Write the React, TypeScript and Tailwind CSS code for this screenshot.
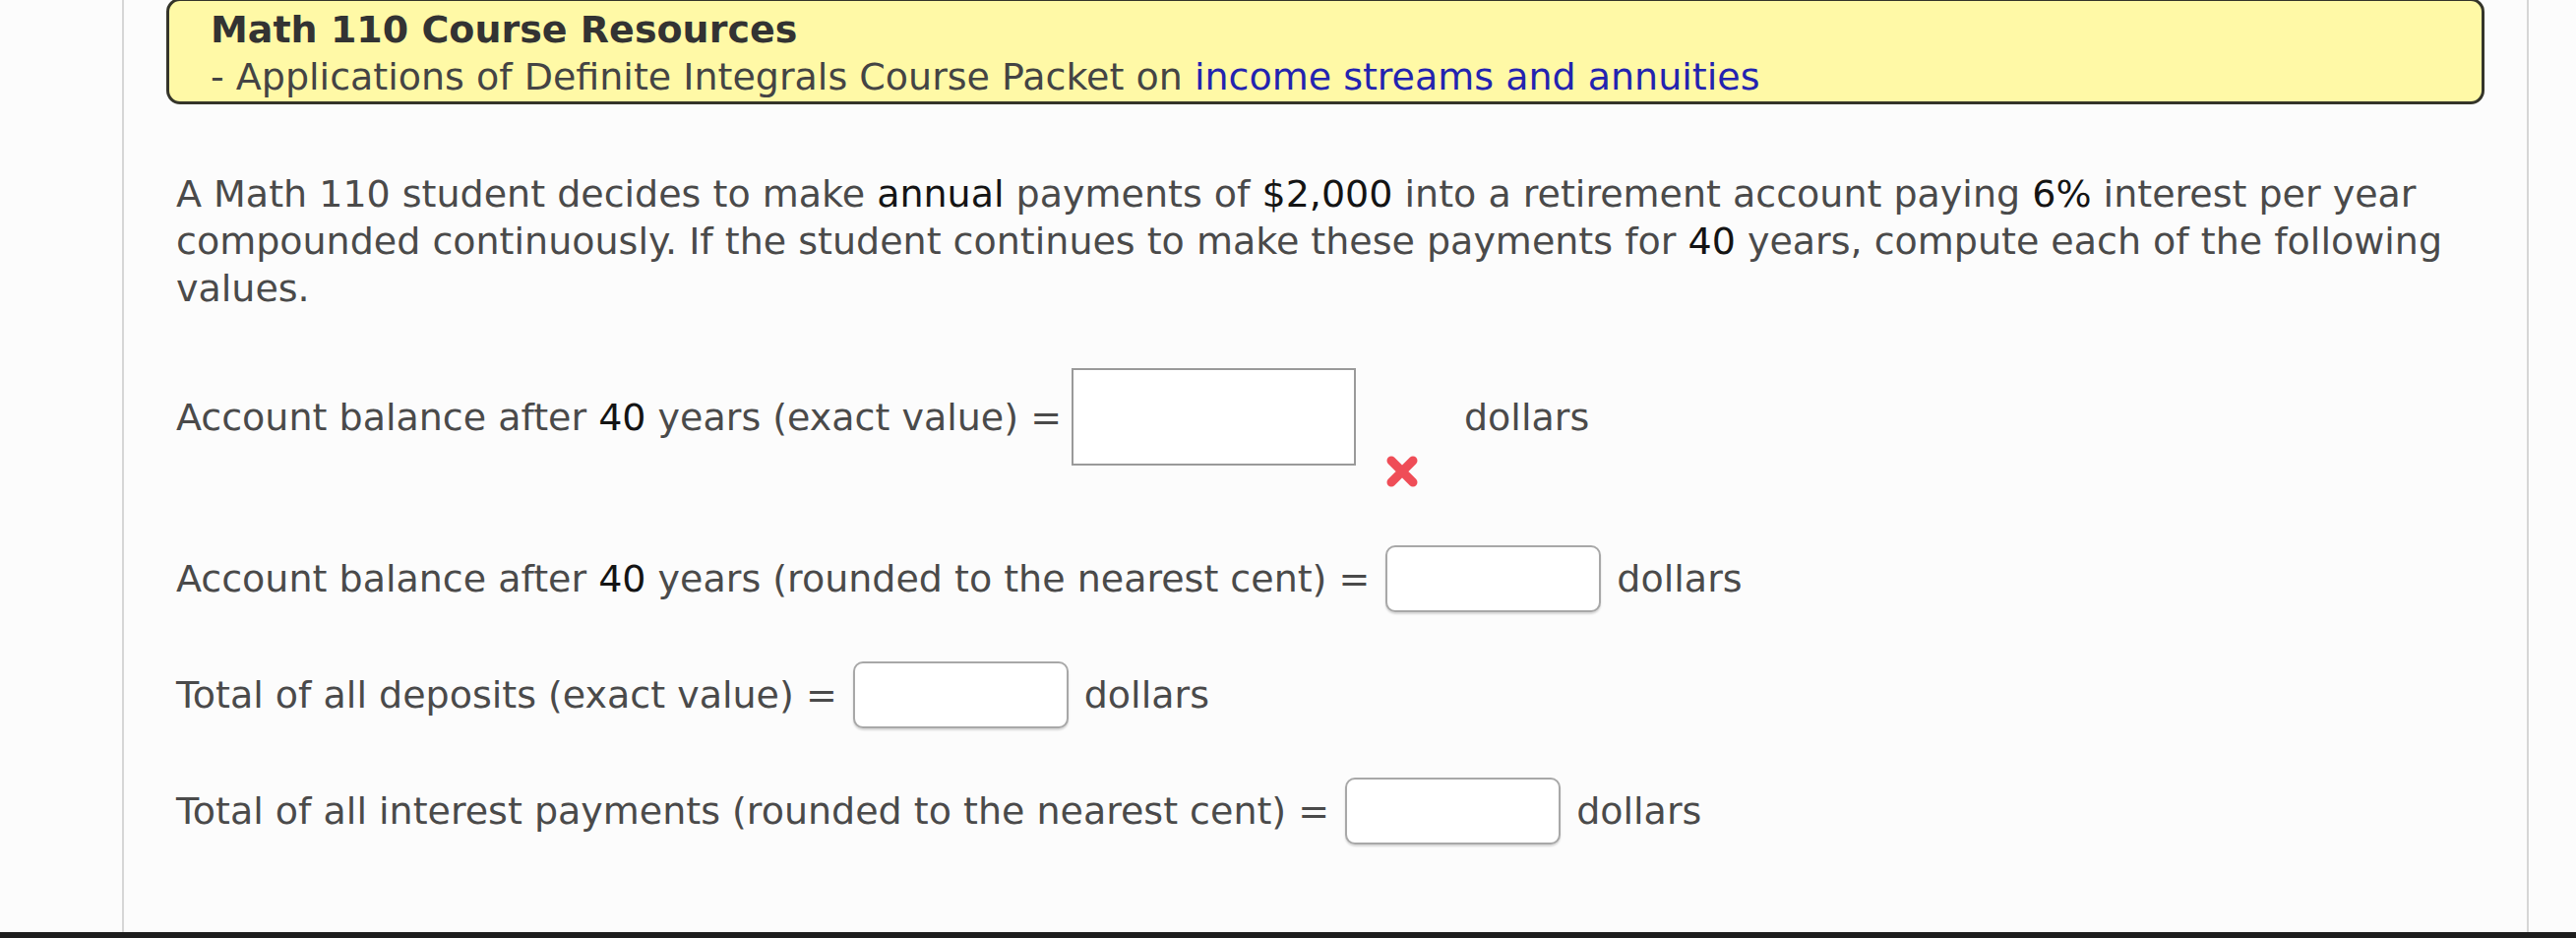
import React from 'react';

const font = { fontFamily: '"DejaVu Sans", Verdana, sans-serif' };

const Em = ({ children }: { children: React.ReactNode }) => (
    <span className="text-[#141414]">{children}</span>
);

const AnswerBox = ({ big }: { big?: boolean }) =>
    big ? (
        <div className="w-[289px] h-[99px] border-2 border-[#9a9a9a] bg-white shrink-0" />
    ) : (
        <div className="w-[219px] h-[68px] border-2 border-[#a8a8a8] rounded-[10px] bg-white shadow-[0_2px_2px_rgba(0,0,0,0.15)] shrink-0" />
    );

const WrongMark = () => (
    <svg className="w-[38px] h-[38px]" viewBox="0 0 38 38">
        <path d="M8 8 L30 30 M30 8 L8 30" stroke="#ef4d57" strokeWidth="9" strokeLinecap="round" />
    </svg>
);

const App = () => {
    return (
        <div className="w-full h-[953px] flex flex-col bg-[#fcfcfc] text-[38px] leading-[48px] text-[#4a4a4a]" style={font}>
            <div className="flex-1 flex">
                <div className="ml-[124px] w-[2446px] border-l-2 border-r-2 border-[#d6d6d6] flex flex-col">
                    {/* Course resources banner */}
                    <div className="mx-[43px] -mt-[2px] bg-[#fff9a6] border-[3px] border-[#35352a] rounded-[14px] pl-[42px] pt-[5px] pb-[1px]">
                        <div className="font-bold text-[#333]">Math 110 Course Resources</div>
                        <div className="text-[#444]">
                            - Applications of Definite Integrals Course Packet on{' '}
                            <span className="text-[#2323b0]">income streams and annuities</span>
                        </div>
                    </div>

                    <p className="mt-[67px] ml-[53px] mr-[43px]">
                        A Math 110 student decides to make <Em>annual</Em> payments of <Em>$2,000</Em> into a retirement
                        account paying <Em>6%</Em> interest per year compounded continuously. If the student continues to
                        make these payments for <Em>40</Em> years, compute each of the following values.
                    </p>

                    <div className="mt-[57px] ml-[53px] flex items-center">
                        <span>Account balance after <Em>40</Em> years (exact value) =</span>
                        <div className="ml-[10px]">
                            <AnswerBox big />
                        </div>
                        <div className="ml-[28px] self-end translate-y-[25px]">
                            <WrongMark />
                        </div>
                        <span className="ml-[44px]">dollars</span>
                    </div>

                    <div className="mt-[81px] ml-[53px] flex items-center">
                        <span>Account balance after <Em>40</Em> years (rounded to the nearest cent) =</span>
                        <div className="ml-[16px]">
                            <AnswerBox />
                        </div>
                        <span className="ml-[16px]">dollars</span>
                    </div>

                    <div className="mt-[50px] ml-[53px] flex items-center">
                        <span>Total of all deposits (exact value) =</span>
                        <div className="ml-[16px]">
                            <AnswerBox />
                        </div>
                        <span className="ml-[16px]">dollars</span>
                    </div>

                    <div className="mt-[50px] ml-[53px] flex items-center">
                        <span>Total of all interest payments (rounded to the nearest cent) =</span>
                        <div className="ml-[16px]">
                            <AnswerBox />
                        </div>
                        <span className="ml-[16px]">dollars</span>
                    </div>
                </div>
            </div>
            <div className="h-[6px] bg-[#1e1e1e]" />
        </div>
    );
};

export default App;
